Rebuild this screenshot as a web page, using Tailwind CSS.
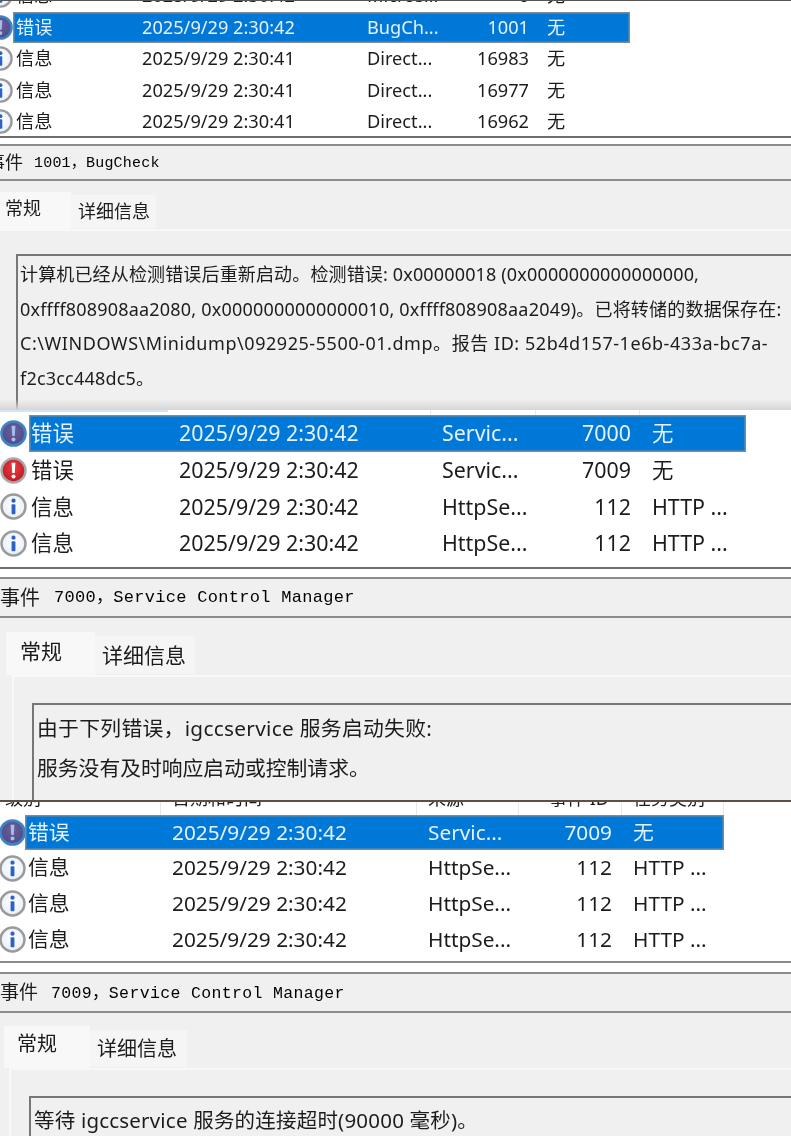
<!DOCTYPE html>
<html lang="zh-CN">
<head>
<meta charset="utf-8">
<script src="https://cdn.jsdelivr.net/npm/@tailwindcss/browser@4"></script>
<title>事件查看器</title>
</head>
<body class="bg-white">
<svg width="0" height="0" class="absolute">
  <defs>
    <radialGradient id="gr" cx="50%" cy="40%" r="60%"><stop offset="0%" stop-color="#ef3b40"/><stop offset="100%" stop-color="#bb1a20"/></radialGradient>
    <radialGradient id="gs" cx="50%" cy="40%" r="60%"><stop offset="0%" stop-color="#6a5f9c"/><stop offset="100%" stop-color="#4d4a85"/></radialGradient>
    <radialGradient id="gi" cx="50%" cy="45%" r="60%"><stop offset="0%" stop-color="#ffffff"/><stop offset="100%" stop-color="#e6edf7"/></radialGradient>
    <symbol id="info" viewBox="0 0 28 28">
      <circle cx="14" cy="14" r="12.4" fill="url(#gi)" stroke="#9a9a9a" stroke-width="2.6"/>
      <circle cx="14" cy="8" r="2.2" fill="#2b62c9"/>
      <rect x="12" y="11.6" width="4" height="10.4" rx="1" fill="#2b62c9"/>
    </symbol>
    <symbol id="err" viewBox="0 0 28 28">
      <circle cx="14" cy="14" r="12.4" fill="url(#gr)" stroke="#a8a8a8" stroke-width="2.6"/>
      <path d="M12 6h4l-.7 10.6h-2.6z" fill="#fff"/>
      <circle cx="14" cy="20.2" r="2.1" fill="#fff"/>
    </symbol>
    <symbol id="sel" viewBox="0 0 28 28">
      <circle cx="14" cy="14" r="12.4" fill="url(#gs)" stroke="#3f83c6" stroke-width="2.8"/>
      <path d="M12 6h4l-.7 10.6h-2.6z" fill="#a9bdea"/>
      <circle cx="14" cy="20.2" r="2.1" fill="#a9bdea"/>
    </symbol>
  </defs>
</svg>

<div class="w-[791px] h-[1136px] overflow-hidden blur-[0.5px] text-[#1c1c1c] font-['Noto_Sans','Noto_Sans_CJK_SC',sans-serif]">

  <!-- Panel 1 -->
  <section class="relative h-[410px] overflow-hidden flex flex-col bg-[#f0f0f0]">
    <div class="absolute top-0 inset-x-0 h-[1px] bg-[#555] z-10"></div>
    <div class="h-[138px] shrink-0 overflow-hidden bg-white border-b-2 border-[#6e6e6e] text-[18.2px]">
      <div class="-mt-[20px] flex items-center h-[31.5px]">
        <svg class="w-[25px] h-[25px] -ml-[12px] shrink-0"><use href="#info"/></svg>
        <div class="w-[617px] flex items-center pl-[3px]">
          <span class="w-[126px]">信息</span><span class="w-[225px]">2025/9/29 2:30:42</span><span class="w-[110px]">Micros...</span><span class="w-[52px] text-right">6</span><span class="ml-[18px]">无</span>
        </div>
      </div>
      <div class="flex items-center h-[31.5px]">
        <svg class="w-[25px] h-[25px] -ml-[12px] shrink-0"><use href="#sel"/></svg>
        <div class="w-[617px] h-full flex items-center pl-[3px] bg-[#0078d7] shadow-[inset_0_0_0_1.5px_#7f8b96] text-[#e6f1fb]">
          <span class="w-[126px]">错误</span><span class="w-[225px]">2025/9/29 2:30:42</span><span class="w-[110px]">BugCh...</span><span class="w-[52px] text-right">1001</span><span class="ml-[18px]">无</span>
        </div>
      </div>
      <div class="flex items-center h-[31.5px]">
        <svg class="w-[25px] h-[25px] -ml-[12px] shrink-0"><use href="#info"/></svg>
        <div class="w-[617px] flex items-center pl-[3px]">
          <span class="w-[126px]">信息</span><span class="w-[225px]">2025/9/29 2:30:41</span><span class="w-[110px]">Direct...</span><span class="w-[52px] text-right">16983</span><span class="ml-[18px]">无</span>
        </div>
      </div>
      <div class="flex items-center h-[31.5px]">
        <svg class="w-[25px] h-[25px] -ml-[12px] shrink-0"><use href="#info"/></svg>
        <div class="w-[617px] flex items-center pl-[3px]">
          <span class="w-[126px]">信息</span><span class="w-[225px]">2025/9/29 2:30:41</span><span class="w-[110px]">Direct...</span><span class="w-[52px] text-right">16977</span><span class="ml-[18px]">无</span>
        </div>
      </div>
      <div class="flex items-center h-[31.5px]">
        <svg class="w-[25px] h-[25px] -ml-[12px] shrink-0"><use href="#info"/></svg>
        <div class="w-[617px] flex items-center pl-[3px]">
          <span class="w-[126px]">信息</span><span class="w-[225px]">2025/9/29 2:30:41</span><span class="w-[110px]">Direct...</span><span class="w-[52px] text-right">16962</span><span class="ml-[18px]">无</span>
        </div>
      </div>
    </div>
    <div class="h-[6px] shrink-0 bg-white"></div>
    <div class="h-[37px] shrink-0 border-y-2 border-[#8c8c8c] flex items-center -ml-[13px] whitespace-nowrap">
      <span class="text-[18px]">事件</span>
      <span class="ml-[11px] mt-[3px] text-[15px] tracking-[0.2px] text-black font-['Liberation_Mono','Noto_Sans_CJK_SC',monospace]">1001，BugCheck</span>
    </div>
    <div class="h-[48px] shrink-0 flex items-end text-[18px]">
      <div class="w-[71px] h-[37px] bg-[#f8f8f8] pl-[5px] leading-[32px]">常规</div>
      <div class="w-[85px] h-[33px] mb-[1px] bg-[#f5f5f5] pl-[7px] leading-[32px]">详细信息</div>
    </div>
    <div class="flex-1 border-t-2 border-[#f8f8f8] pt-[23px] pl-[16px]">
      <div class="h-full border-l-2 border-t-2 border-[#777] pl-[2px] pt-[1px] text-[18px] leading-[34.5px] whitespace-nowrap">
        <div class="tracking-[0.15px]">计算机已经从检测错误后重新启动。检测错误: 0x00000018 (0x0000000000000000,</div>
        <div class="tracking-[0.2px]">0xffff808908aa2080, 0x0000000000000010, 0xffff808908aa2049)。已将转储的数据保存在:</div>
        <div class="tracking-[0.55px]">C:\WINDOWS\Minidump\092925-5500-01.dmp。报告 ID: 52b4d157-1e6b-433a-bc7a-</div>
        <div class="tracking-[0.2px]">f2c3cc448dc5。</div>
      </div>
    </div>
    <div class="absolute bottom-0 inset-x-0 h-[11px] bg-gradient-to-b from-transparent to-[#d6d6d6]"></div>
  </section>

  <!-- Panel 2 -->
  <section class="relative h-[390px] overflow-hidden flex flex-col bg-[#f0f0f0]">
    <div class="h-[159px] shrink-0 overflow-hidden bg-white border-b-2 border-[#6e6e6e] text-[21.4px]">
      <div class="h-[5px] flex">
        <div class="w-[168px] h-[2px] bg-[#d4e6f6]"></div>
        <div class="w-[263px] border-r border-[#e8e8e8]"></div>
        <div class="w-[105px] border-r border-[#e8e8e8]"></div>
        <div class="w-[104px] border-r border-[#e8e8e8]"></div>
      </div>
      <div class="flex items-center h-[36.7px]">
        <svg class="w-[27px] h-[27px] shrink-0 mr-[2px]"><use href="#sel"/></svg>
        <div class="w-[717px] h-full flex items-center pl-[2px] bg-[#0078d7] shadow-[inset_0_0_0_1.5px_#7f8b96] text-[#e6f1fb]">
          <span class="w-[148px]">错误</span><span class="w-[263px]">2025/9/29 2:30:42</span><span class="w-[130px]">Servic...</span><span class="w-[59px] text-right">7000</span><span class="ml-[21px]">无</span>
        </div>
      </div>
      <div class="flex items-center h-[36.7px]">
        <svg class="w-[27px] h-[27px] shrink-0 mr-[2px]"><use href="#err"/></svg>
        <div class="w-[717px] flex items-center pl-[2px]">
          <span class="w-[148px]">错误</span><span class="w-[263px]">2025/9/29 2:30:42</span><span class="w-[130px]">Servic...</span><span class="w-[59px] text-right">7009</span><span class="ml-[21px]">无</span>
        </div>
      </div>
      <div class="flex items-center h-[36.7px]">
        <svg class="w-[27px] h-[27px] shrink-0 mr-[2px]"><use href="#info"/></svg>
        <div class="w-[717px] flex items-center pl-[2px]">
          <span class="w-[148px]">信息</span><span class="w-[263px]">2025/9/29 2:30:42</span><span class="w-[130px]">HttpSe...</span><span class="w-[59px] text-right">112</span><span class="ml-[21px]">HTTP ...</span>
        </div>
      </div>
      <div class="flex items-center h-[36.7px]">
        <svg class="w-[27px] h-[27px] shrink-0 mr-[2px]"><use href="#info"/></svg>
        <div class="w-[717px] flex items-center pl-[2px]">
          <span class="w-[148px]">信息</span><span class="w-[263px]">2025/9/29 2:30:42</span><span class="w-[130px]">HttpSe...</span><span class="w-[59px] text-right">112</span><span class="ml-[21px]">HTTP ...</span>
        </div>
      </div>
      <div class="flex items-center h-[36.7px]">
        <svg class="w-[27px] h-[27px] shrink-0"><use href="#info"/></svg>
      </div>
    </div>
    <div class="h-[8px] shrink-0 bg-white"></div>
    <div class="h-[41px] shrink-0 border-y-2 border-[#8c8c8c] flex items-center whitespace-nowrap">
      <span class="text-[20px]">事件</span>
      <span class="ml-[14px] text-[17px] tracking-[0.3px] text-black font-['Liberation_Mono','Noto_Sans_CJK_SC',monospace]">7000，Service Control Manager</span>
    </div>
    <div class="h-[57px] shrink-0 flex items-end pl-[6px] text-[21px]">
      <div class="w-[89px] h-[43px] bg-[#f8f8f8] pl-[14px] leading-[38px]">常规</div>
      <div class="w-[100px] h-[38px] mb-[1px] bg-[#f5f5f5] pl-[7px] leading-[38px]">详细信息</div>
    </div>
    <div class="flex-1 ml-[12px] bg-[#f0f0f0] border-t-2 border-l-2 border-[#f8f8f8] pt-[26px] pl-[18px]">
      <div class="h-full border-l-2 border-t-2 border-[#777] pl-[3px] pt-[3px] text-[20.8px] leading-[40px] whitespace-nowrap">
        <div class="tracking-[0.3px]">由于下列错误，igccservice 服务启动失败:</div>
        <div>服务没有及时响应启动或控制请求。</div>
      </div>
    </div>
  </section>

  <!-- Panel 3 -->
  <section class="relative h-[336px] overflow-hidden flex flex-col bg-[#f0f0f0]">
    <div class="h-[163px] shrink-0 overflow-hidden bg-white border-t-2 border-b-2 border-t-[#5a5045] border-b-[#8c8c8c] text-[20.8px]">
      <div class="h-[12.5px] overflow-hidden flex items-start">
        <span class="w-[161px] border-r border-[#e8e8e8] pl-[5px] -mt-[17px] h-[32px] text-[18px]">级别</span>
        <span class="w-[256px] border-r border-[#e8e8e8] pl-[11px] -mt-[17px] h-[32px] text-[18px]">日期和时间</span>
        <span class="w-[102px] border-r border-[#e8e8e8] pl-[11px] -mt-[17px] h-[32px] text-[18px]">来源</span>
        <span class="w-[103px] border-r border-[#e8e8e8] pl-[30px] -mt-[17px] h-[32px] text-[18px]">事件 ID</span>
        <span class="w-[102px] border-r border-[#e8e8e8] pl-[11px] -mt-[17px] h-[32px] text-[18px] whitespace-nowrap">任务类别</span>
      </div>
      <div class="flex items-center h-[35.7px]">
        <svg class="w-[27px] h-[27px] -ml-[1px] -mr-[1px] shrink-0"><use href="#sel"/></svg>
        <div class="w-[699px] h-full flex items-center pl-[3px] bg-[#0078d7] shadow-[inset_0_0_0_1.5px_#7f8b96] text-[#e6f1fb]">
          <span class="w-[144px]">错误</span><span class="w-[256px]">2025/9/29 2:30:42</span><span class="w-[125px]">Servic...</span><span class="w-[59px] text-right">7009</span><span class="ml-[21px]">无</span>
        </div>
      </div>
      <div class="flex items-center h-[35.7px]">
        <svg class="w-[27px] h-[27px] -ml-[1px] -mr-[1px] shrink-0"><use href="#info"/></svg>
        <div class="w-[699px] flex items-center pl-[3px]">
          <span class="w-[144px]">信息</span><span class="w-[256px]">2025/9/29 2:30:42</span><span class="w-[125px]">HttpSe...</span><span class="w-[59px] text-right">112</span><span class="ml-[21px]">HTTP ...</span>
        </div>
      </div>
      <div class="flex items-center h-[35.7px]">
        <svg class="w-[27px] h-[27px] -ml-[1px] -mr-[1px] shrink-0"><use href="#info"/></svg>
        <div class="w-[699px] flex items-center pl-[3px]">
          <span class="w-[144px]">信息</span><span class="w-[256px]">2025/9/29 2:30:42</span><span class="w-[125px]">HttpSe...</span><span class="w-[59px] text-right">112</span><span class="ml-[21px]">HTTP ...</span>
        </div>
      </div>
      <div class="flex items-center h-[35.7px]">
        <svg class="w-[27px] h-[27px] -ml-[1px] -mr-[1px] shrink-0"><use href="#info"/></svg>
        <div class="w-[699px] flex items-center pl-[3px]">
          <span class="w-[144px]">信息</span><span class="w-[256px]">2025/9/29 2:30:42</span><span class="w-[125px]">HttpSe...</span><span class="w-[59px] text-right">112</span><span class="ml-[21px]">HTTP ...</span>
        </div>
      </div>
    </div>
    <div class="h-[9px] shrink-0 bg-white"></div>
    <div class="h-[41px] shrink-0 border-y-2 border-[#8c8c8c] flex items-center whitespace-nowrap">
      <span class="text-[19px]">事件</span>
      <span class="ml-[13px] mt-[3px] text-[16.5px] tracking-[0.35px] text-black font-['Liberation_Mono','Noto_Sans_CJK_SC',monospace]">7009，Service Control Manager</span>
    </div>
    <div class="h-[55px] shrink-0 flex items-end pl-[4px] text-[20px]">
      <div class="w-[86px] h-[42px] bg-[#f8f8f8] pl-[13px] leading-[36px]">常规</div>
      <div class="w-[97px] h-[37px] mb-[1px] bg-[#f5f5f5] pl-[7px] leading-[37px]">详细信息</div>
    </div>
    <div class="flex-1 ml-[9px] bg-[#f0f0f0] border-t-2 border-l-2 border-[#f8f8f8] pt-[26px] pl-[18px]">
      <div class="h-full border-l-2 border-t-2 border-[#777] pl-[3px] pt-[2px] text-[20.5px] leading-[40px] tracking-[0.2px] whitespace-nowrap">
        <div>等待 igccservice 服务的连接超时(90000 毫秒)。</div>
      </div>
    </div>
  </section>
</div>
</body>
</html>
